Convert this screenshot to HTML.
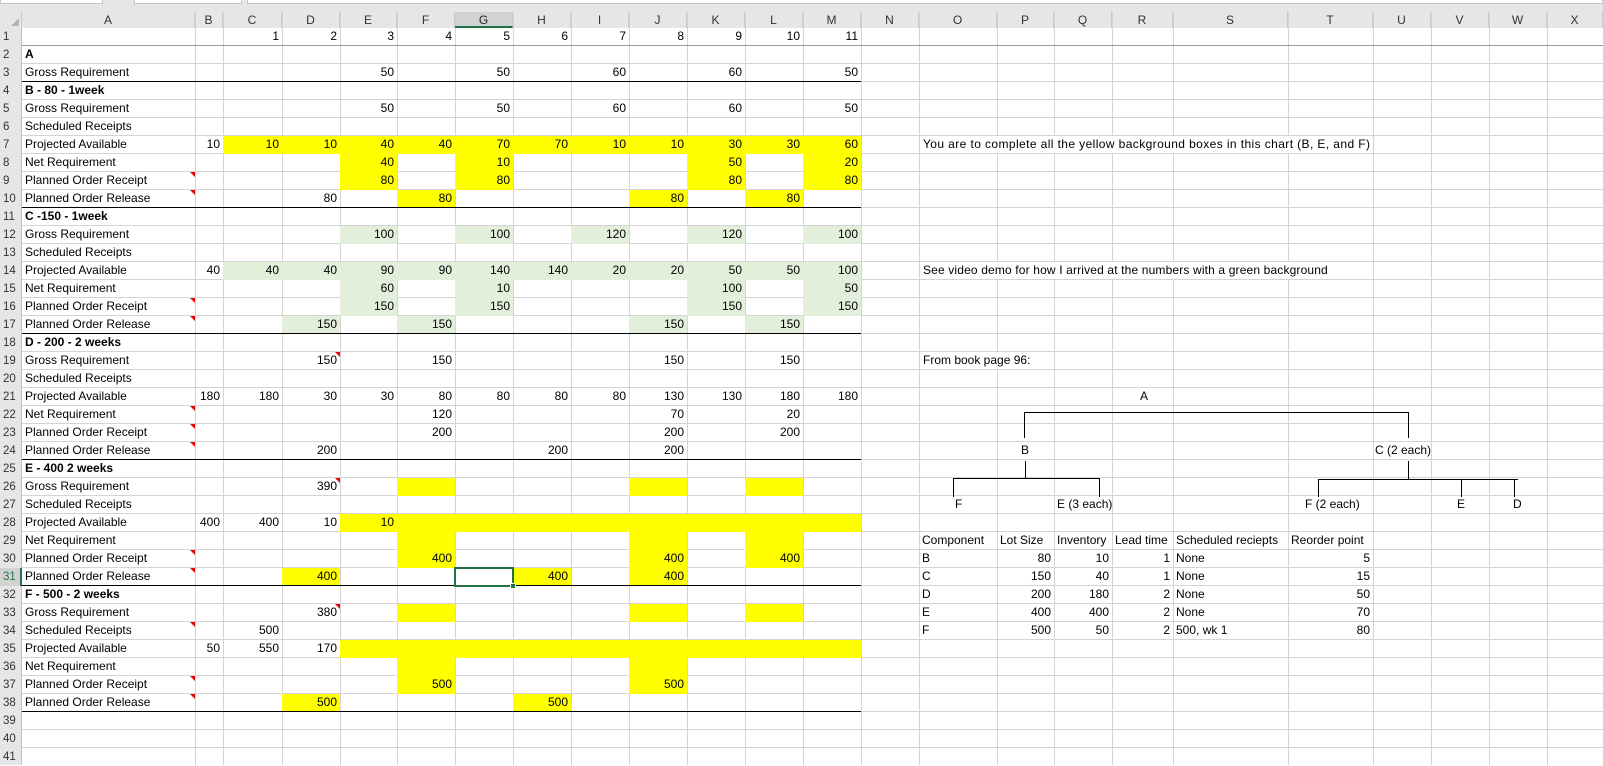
<!DOCTYPE html>
<html><head><meta charset="utf-8"><style>
*{margin:0;padding:0;box-sizing:border-box}
body{width:1603px;height:765px;overflow:hidden;background:#fff;position:relative;font-family:"Liberation Sans",Arial,sans-serif;font-size:12px;color:#000}
.top{position:absolute;left:0;top:0;width:1603px;height:28px;background:#e6e6e6}
.box{position:absolute;top:0;height:4px;background:#fff;border:1px solid #c6c6c6;border-top:none}
.grid{position:absolute;left:22px;top:28px;width:1581px;height:737px;background:repeating-linear-gradient(to bottom,transparent 0 17px,#d4d4d4 17px 18px)}
.v{position:absolute;top:12px;width:1px;height:753px;background:#d4d4d4}
.rh{position:absolute;left:0;top:28px;width:22px;height:737px;background:#e6e6e6;border-right:1px solid #c0c0c0}
.rn{position:absolute;left:0;width:22px;height:18px;line-height:18px;font-size:11.5px;padding-left:3px;color:#333}
.ch{position:absolute;top:12px;height:16px;line-height:16px;text-align:center;font-size:12px;color:#333;border-right:1px solid #c8c8c8}
.c{position:absolute;height:18px;line-height:17px;white-space:nowrap}
.w{height:17px;background:#fff}
.n{text-align:right;padding-right:3px}
.t{padding-left:3px}
.b{font-weight:bold}
.y{position:absolute;height:18px;background:#ffff00}
.g{position:absolute;height:18px;background:#e2efda}
.k{position:absolute;height:1px;background:#000;left:22px;width:839px}
.tri{position:absolute;width:0;height:0;border-top:5px solid #e00;border-left:5px solid transparent}
.ln{position:absolute;background:#000}
.A{left:22px;width:173px}.B{left:195px;width:28px}.C{left:223px;width:59px}.D{left:282px;width:58px}.E{left:340px;width:57px}.F{left:397px;width:58px}.G{left:455px;width:58px}.H{left:513px;width:58px}.I{left:571px;width:58px}.J{left:629px;width:58px}.K{left:687px;width:58px}.L{left:745px;width:58px}.M{left:803px;width:58px}.N{left:861px;width:58px}.O{left:919px;width:78px}.P{left:997px;width:57px}.Q{left:1054px;width:58px}.R{left:1112px;width:61px}.S{left:1173px;width:115px}.T{left:1288px;width:85px}.U{left:1373px;width:58px}.V{left:1431px;width:58px}.W{left:1489px;width:58px}.X{left:1547px;width:56px}
</style></head><body>
<div class="top"></div>
<div class="box" style="left:0;width:103px"></div>
<div class="box" style="left:134px;width:108px"></div>
<div class="box" style="left:247px;width:1356px"></div>
<div class="grid"></div>
<div class="v" style="left:195px"></div><div class="v" style="left:223px"></div><div class="v" style="left:282px"></div><div class="v" style="left:340px"></div><div class="v" style="left:397px"></div><div class="v" style="left:455px"></div><div class="v" style="left:513px"></div><div class="v" style="left:571px"></div><div class="v" style="left:629px"></div><div class="v" style="left:687px"></div><div class="v" style="left:745px"></div><div class="v" style="left:803px"></div><div class="v" style="left:861px"></div><div class="v" style="left:919px"></div><div class="v" style="left:997px"></div><div class="v" style="left:1054px"></div><div class="v" style="left:1112px"></div><div class="v" style="left:1173px"></div><div class="v" style="left:1288px"></div><div class="v" style="left:1373px"></div><div class="v" style="left:1431px"></div><div class="v" style="left:1489px"></div><div class="v" style="left:1547px"></div>
<div class="ch" style="left:0;width:22px"><span style="position:absolute;right:2px;bottom:2px;border-bottom:8px solid #b4b4b4;border-left:8px solid transparent"></span></div>
<div class="ch A">A</div><div class="ch B">B</div><div class="ch C">C</div><div class="ch D">D</div><div class="ch E">E</div><div class="ch F">F</div><div class="ch G" style="background:#d2d2d2;border-bottom:2px solid #217346;color:#222">G</div><div class="ch H">H</div><div class="ch I">I</div><div class="ch J">J</div><div class="ch K">K</div><div class="ch L">L</div><div class="ch M">M</div><div class="ch N">N</div><div class="ch O">O</div><div class="ch P">P</div><div class="ch Q">Q</div><div class="ch R">R</div><div class="ch S">S</div><div class="ch T">T</div><div class="ch U">U</div><div class="ch V">V</div><div class="ch W">W</div><div class="ch X">X</div>
<div style="position:absolute;left:0;top:45px;width:1603px;height:1px;background:#9b9b9b"></div>
<div class="rh"></div>
<div class="rn" style="top:28px">1</div><div class="rn" style="top:46px">2</div><div class="rn" style="top:64px">3</div><div class="rn" style="top:82px">4</div><div class="rn" style="top:100px">5</div><div class="rn" style="top:118px">6</div><div class="rn" style="top:136px">7</div><div class="rn" style="top:154px">8</div><div class="rn" style="top:172px">9</div><div class="rn" style="top:190px">10</div><div class="rn" style="top:208px">11</div><div class="rn" style="top:226px">12</div><div class="rn" style="top:244px">13</div><div class="rn" style="top:262px">14</div><div class="rn" style="top:280px">15</div><div class="rn" style="top:298px">16</div><div class="rn" style="top:316px">17</div><div class="rn" style="top:334px">18</div><div class="rn" style="top:352px">19</div><div class="rn" style="top:370px">20</div><div class="rn" style="top:388px">21</div><div class="rn" style="top:406px">22</div><div class="rn" style="top:424px">23</div><div class="rn" style="top:442px">24</div><div class="rn" style="top:460px">25</div><div class="rn" style="top:478px">26</div><div class="rn" style="top:496px">27</div><div class="rn" style="top:514px">28</div><div class="rn" style="top:532px">29</div><div class="rn" style="top:550px">30</div><div class="rn" style="top:568px;background:#d2d2d2;border-right:2px solid #217346;color:#217346">31</div><div class="rn" style="top:586px">32</div><div class="rn" style="top:604px">33</div><div class="rn" style="top:622px">34</div><div class="rn" style="top:640px">35</div><div class="rn" style="top:658px">36</div><div class="rn" style="top:676px">37</div><div class="rn" style="top:694px">38</div><div class="rn" style="top:712px">39</div><div class="rn" style="top:730px">40</div><div class="rn" style="top:748px">41</div>

<div class="y" style="left:223px;width:638px;top:136px"></div>
<div class="y E" style="top:154px;height:36px"></div><div class="y G" style="top:154px;height:36px"></div><div class="y K" style="top:154px;height:36px"></div><div class="y M" style="top:154px;height:36px"></div>
<div class="y F" style="top:190px"></div><div class="y J" style="top:190px"></div><div class="y L" style="top:190px"></div>
<div class="g E" style="top:226px"></div><div class="g G" style="top:226px"></div><div class="g I" style="top:226px"></div><div class="g K" style="top:226px"></div><div class="g M" style="top:226px"></div>
<div class="g" style="left:223px;width:638px;top:262px"></div>
<div class="g E" style="top:280px;height:36px"></div><div class="g G" style="top:280px;height:36px"></div><div class="g K" style="top:280px;height:36px"></div><div class="g M" style="top:280px;height:36px"></div>
<div class="g D" style="top:316px"></div><div class="g F" style="top:316px"></div><div class="g J" style="top:316px"></div><div class="g L" style="top:316px"></div>
<div class="y F" style="top:478px"></div><div class="y J" style="top:478px"></div><div class="y L" style="top:478px"></div>
<div class="y" style="left:340px;width:521px;top:514px"></div>
<div class="y F" style="top:532px;height:36px"></div><div class="y J" style="top:532px;height:54px"></div><div class="y L" style="top:532px;height:36px"></div>
<div class="y D" style="top:568px"></div><div class="y H" style="top:568px"></div>
<div class="y F" style="top:604px"></div><div class="y J" style="top:604px"></div><div class="y L" style="top:604px"></div>
<div class="y" style="left:340px;width:521px;top:640px"></div>
<div class="y F" style="top:658px;height:36px"></div><div class="y J" style="top:658px;height:36px"></div>
<div class="y D" style="top:694px"></div><div class="y H" style="top:694px"></div>

<div class="k" style="top:81px"></div><div class="k" style="top:207px"></div><div class="k" style="top:333px"></div><div class="k" style="top:459px"></div><div class="k" style="top:585px"></div><div class="k" style="top:711px"></div>

<div class="c n C" style="top:28px">1</div><div class="c n D" style="top:28px">2</div><div class="c n E" style="top:28px">3</div><div class="c n F" style="top:28px">4</div><div class="c n G" style="top:28px">5</div><div class="c n H" style="top:28px">6</div><div class="c n I" style="top:28px">7</div><div class="c n J" style="top:28px">8</div><div class="c n K" style="top:28px">9</div><div class="c n L" style="top:28px">10</div><div class="c n M" style="top:28px">11</div>
<div class="c t b A" style="top:46px">A</div>
<div class="c t A" style="top:64px">Gross Requirement</div><div class="c n E" style="top:64px">50</div><div class="c n G" style="top:64px">50</div><div class="c n I" style="top:64px">60</div><div class="c n K" style="top:64px">60</div><div class="c n M" style="top:64px">50</div>
<div class="c t b A" style="top:82px">B - 80 - 1week</div>
<div class="c t A" style="top:100px">Gross Requirement</div><div class="c n E" style="top:100px">50</div><div class="c n G" style="top:100px">50</div><div class="c n I" style="top:100px">60</div><div class="c n K" style="top:100px">60</div><div class="c n M" style="top:100px">50</div>
<div class="c t A" style="top:118px">Scheduled Receipts</div>
<div class="c t A" style="top:136px">Projected Available</div><div class="c n B" style="top:136px">10</div><div class="c n C" style="top:136px">10</div><div class="c n D" style="top:136px">10</div><div class="c n E" style="top:136px">40</div><div class="c n F" style="top:136px">40</div><div class="c n G" style="top:136px">70</div><div class="c n H" style="top:136px">70</div><div class="c n I" style="top:136px">10</div><div class="c n J" style="top:136px">10</div><div class="c n K" style="top:136px">30</div><div class="c n L" style="top:136px">30</div><div class="c n M" style="top:136px">60</div>
<div class="c t A" style="top:154px">Net Requirement</div><div class="c n E" style="top:154px">40</div><div class="c n G" style="top:154px">10</div><div class="c n K" style="top:154px">50</div><div class="c n M" style="top:154px">20</div>
<div class="c t A" style="top:172px">Planned Order Receipt</div><div class="c n E" style="top:172px">80</div><div class="c n G" style="top:172px">80</div><div class="c n K" style="top:172px">80</div><div class="c n M" style="top:172px">80</div>
<div class="c t A" style="top:190px">Planned Order Release</div><div class="c n D" style="top:190px">80</div><div class="c n F" style="top:190px">80</div><div class="c n J" style="top:190px">80</div><div class="c n L" style="top:190px">80</div>
<div class="c t b A" style="top:208px">C -150 - 1week</div>
<div class="c t A" style="top:226px">Gross Requirement</div><div class="c n E" style="top:226px">100</div><div class="c n G" style="top:226px">100</div><div class="c n I" style="top:226px">120</div><div class="c n K" style="top:226px">120</div><div class="c n M" style="top:226px">100</div>
<div class="c t A" style="top:244px">Scheduled Receipts</div>
<div class="c t A" style="top:262px">Projected Available</div><div class="c n B" style="top:262px">40</div><div class="c n C" style="top:262px">40</div><div class="c n D" style="top:262px">40</div><div class="c n E" style="top:262px">90</div><div class="c n F" style="top:262px">90</div><div class="c n G" style="top:262px">140</div><div class="c n H" style="top:262px">140</div><div class="c n I" style="top:262px">20</div><div class="c n J" style="top:262px">20</div><div class="c n K" style="top:262px">50</div><div class="c n L" style="top:262px">50</div><div class="c n M" style="top:262px">100</div>
<div class="c t A" style="top:280px">Net Requirement</div><div class="c n E" style="top:280px">60</div><div class="c n G" style="top:280px">10</div><div class="c n K" style="top:280px">100</div><div class="c n M" style="top:280px">50</div>
<div class="c t A" style="top:298px">Planned Order Receipt</div><div class="c n E" style="top:298px">150</div><div class="c n G" style="top:298px">150</div><div class="c n K" style="top:298px">150</div><div class="c n M" style="top:298px">150</div>
<div class="c t A" style="top:316px">Planned Order Release</div><div class="c n D" style="top:316px">150</div><div class="c n F" style="top:316px">150</div><div class="c n J" style="top:316px">150</div><div class="c n L" style="top:316px">150</div>
<div class="c t b A" style="top:334px">D - 200 - 2 weeks</div>
<div class="c t A" style="top:352px">Gross Requirement</div><div class="c n D" style="top:352px">150</div><div class="c n F" style="top:352px">150</div><div class="c n J" style="top:352px">150</div><div class="c n L" style="top:352px">150</div>
<div class="c t A" style="top:370px">Scheduled Receipts</div>
<div class="c t A" style="top:388px">Projected Available</div><div class="c n B" style="top:388px">180</div><div class="c n C" style="top:388px">180</div><div class="c n D" style="top:388px">30</div><div class="c n E" style="top:388px">30</div><div class="c n F" style="top:388px">80</div><div class="c n G" style="top:388px">80</div><div class="c n H" style="top:388px">80</div><div class="c n I" style="top:388px">80</div><div class="c n J" style="top:388px">130</div><div class="c n K" style="top:388px">130</div><div class="c n L" style="top:388px">180</div><div class="c n M" style="top:388px">180</div>
<div class="c t A" style="top:406px">Net Requirement</div><div class="c n F" style="top:406px">120</div><div class="c n J" style="top:406px">70</div><div class="c n L" style="top:406px">20</div>
<div class="c t A" style="top:424px">Planned Order Receipt</div><div class="c n F" style="top:424px">200</div><div class="c n J" style="top:424px">200</div><div class="c n L" style="top:424px">200</div>
<div class="c t A" style="top:442px">Planned Order Release</div><div class="c n D" style="top:442px">200</div><div class="c n H" style="top:442px">200</div><div class="c n J" style="top:442px">200</div>
<div class="c t b A" style="top:460px">E - 400 2 weeks</div>
<div class="c t A" style="top:478px">Gross Requirement</div><div class="c n D" style="top:478px">390</div>
<div class="c t A" style="top:496px">Scheduled Receipts</div>
<div class="c t A" style="top:514px">Projected Available</div><div class="c n B" style="top:514px">400</div><div class="c n C" style="top:514px">400</div><div class="c n D" style="top:514px">10</div><div class="c n E" style="top:514px">10</div>
<div class="c t A" style="top:532px">Net Requirement</div>
<div class="c t A" style="top:550px">Planned Order Receipt</div><div class="c n F" style="top:550px">400</div><div class="c n J" style="top:550px">400</div><div class="c n L" style="top:550px">400</div>
<div class="c t A" style="top:568px">Planned Order Release</div><div class="c n D" style="top:568px">400</div><div class="c n H" style="top:568px">400</div><div class="c n J" style="top:568px">400</div>
<div class="c t b A" style="top:586px">F - 500 - 2 weeks</div>
<div class="c t A" style="top:604px">Gross Requirement</div><div class="c n D" style="top:604px">380</div>
<div class="c t A" style="top:622px">Scheduled Receipts</div><div class="c n C" style="top:622px">500</div>
<div class="c t A" style="top:640px">Projected Available</div><div class="c n B" style="top:640px">50</div><div class="c n C" style="top:640px">550</div><div class="c n D" style="top:640px">170</div>
<div class="c t A" style="top:658px">Net Requirement</div>
<div class="c t A" style="top:676px">Planned Order Receipt</div><div class="c n F" style="top:676px">500</div><div class="c n J" style="top:676px">500</div>
<div class="c t A" style="top:694px">Planned Order Release</div><div class="c n D" style="top:694px">500</div><div class="c n H" style="top:694px">500</div>

<div class="tri" style="left:190px;top:172px"></div><div class="tri" style="left:190px;top:190px"></div><div class="tri" style="left:190px;top:298px"></div><div class="tri" style="left:190px;top:316px"></div><div class="tri" style="left:190px;top:406px"></div><div class="tri" style="left:190px;top:424px"></div><div class="tri" style="left:190px;top:442px"></div><div class="tri" style="left:190px;top:550px"></div><div class="tri" style="left:190px;top:568px"></div><div class="tri" style="left:190px;top:622px"></div><div class="tri" style="left:190px;top:676px"></div><div class="tri" style="left:190px;top:694px"></div>
<div class="tri" style="left:335px;top:352px"></div><div class="tri" style="left:335px;top:478px"></div><div class="tri" style="left:335px;top:604px"></div>

<div style="position:absolute;left:454px;top:567px;width:60px;height:20px;border:2px solid #217346"></div>
<div style="position:absolute;left:510px;top:583px;width:6px;height:6px;background:#217346;border:1px solid #fff"></div>

<div class="c w t" style="left:920px;top:136px;letter-spacing:0.4px">You are to complete all the yellow background boxes in this chart (B, E, and F)</div>
<div class="c w t" style="left:920px;top:262px;letter-spacing:0.15px">See video demo for how I arrived at the numbers with a green background</div>
<div class="c w t" style="left:920px;top:352px">From book page 96:</div>
<div class="c" style="left:1140px;top:388px">A</div>
<div class="c" style="left:1021px;top:442px">B</div>
<div class="c w" style="left:1375px;top:442px">C (2 each)</div>
<div class="c" style="left:955px;top:496px">F</div>
<div class="c w" style="left:1057px;top:496px">E (3 each)</div>
<div class="c w" style="left:1305px;top:496px">F (2 each)</div>
<div class="c" style="left:1457px;top:496px">E</div>
<div class="c" style="left:1513px;top:496px">D</div>
<div class="ln" style="left:1024px;top:412px;width:385px;height:1px"></div>
<div class="ln" style="left:1024px;top:412px;width:1px;height:26px"></div>
<div class="ln" style="left:1408px;top:412px;width:1px;height:26px"></div>
<div class="ln" style="left:1025px;top:461px;width:1px;height:18px"></div>
<div class="ln" style="left:953px;top:478px;width:147px;height:1px"></div>
<div class="ln" style="left:953px;top:478px;width:1px;height:19px"></div>
<div class="ln" style="left:1099px;top:478px;width:1px;height:19px"></div>
<div class="ln" style="left:1408px;top:461px;width:1px;height:19px"></div>
<div class="ln" style="left:1318px;top:479px;width:200px;height:1px"></div>
<div class="ln" style="left:1318px;top:479px;width:1px;height:18px"></div>
<div class="ln" style="left:1461px;top:479px;width:1px;height:18px"></div>
<div class="ln" style="left:1514px;top:479px;width:1px;height:18px"></div>

<div class="c t O" style="top:532px">Component</div><div class="c t P" style="top:532px">Lot Size</div><div class="c t Q" style="top:532px">Inventory</div><div class="c t R" style="top:532px">Lead time</div><div class="c t S" style="top:532px">Scheduled reciepts</div><div class="c t T" style="top:532px">Reorder point</div>
<div class="c t O" style="top:550px">B</div><div class="c n P" style="top:550px">80</div><div class="c n Q" style="top:550px">10</div><div class="c n R" style="top:550px">1</div><div class="c t S" style="top:550px">None</div><div class="c n T" style="top:550px">5</div>
<div class="c t O" style="top:568px">C</div><div class="c n P" style="top:568px">150</div><div class="c n Q" style="top:568px">40</div><div class="c n R" style="top:568px">1</div><div class="c t S" style="top:568px">None</div><div class="c n T" style="top:568px">15</div>
<div class="c t O" style="top:586px">D</div><div class="c n P" style="top:586px">200</div><div class="c n Q" style="top:586px">180</div><div class="c n R" style="top:586px">2</div><div class="c t S" style="top:586px">None</div><div class="c n T" style="top:586px">50</div>
<div class="c t O" style="top:604px">E</div><div class="c n P" style="top:604px">400</div><div class="c n Q" style="top:604px">400</div><div class="c n R" style="top:604px">2</div><div class="c t S" style="top:604px">None</div><div class="c n T" style="top:604px">70</div>
<div class="c t O" style="top:622px">F</div><div class="c n P" style="top:622px">500</div><div class="c n Q" style="top:622px">50</div><div class="c n R" style="top:622px">2</div><div class="c t S" style="top:622px">500, wk 1</div><div class="c n T" style="top:622px">80</div>
</body></html>
